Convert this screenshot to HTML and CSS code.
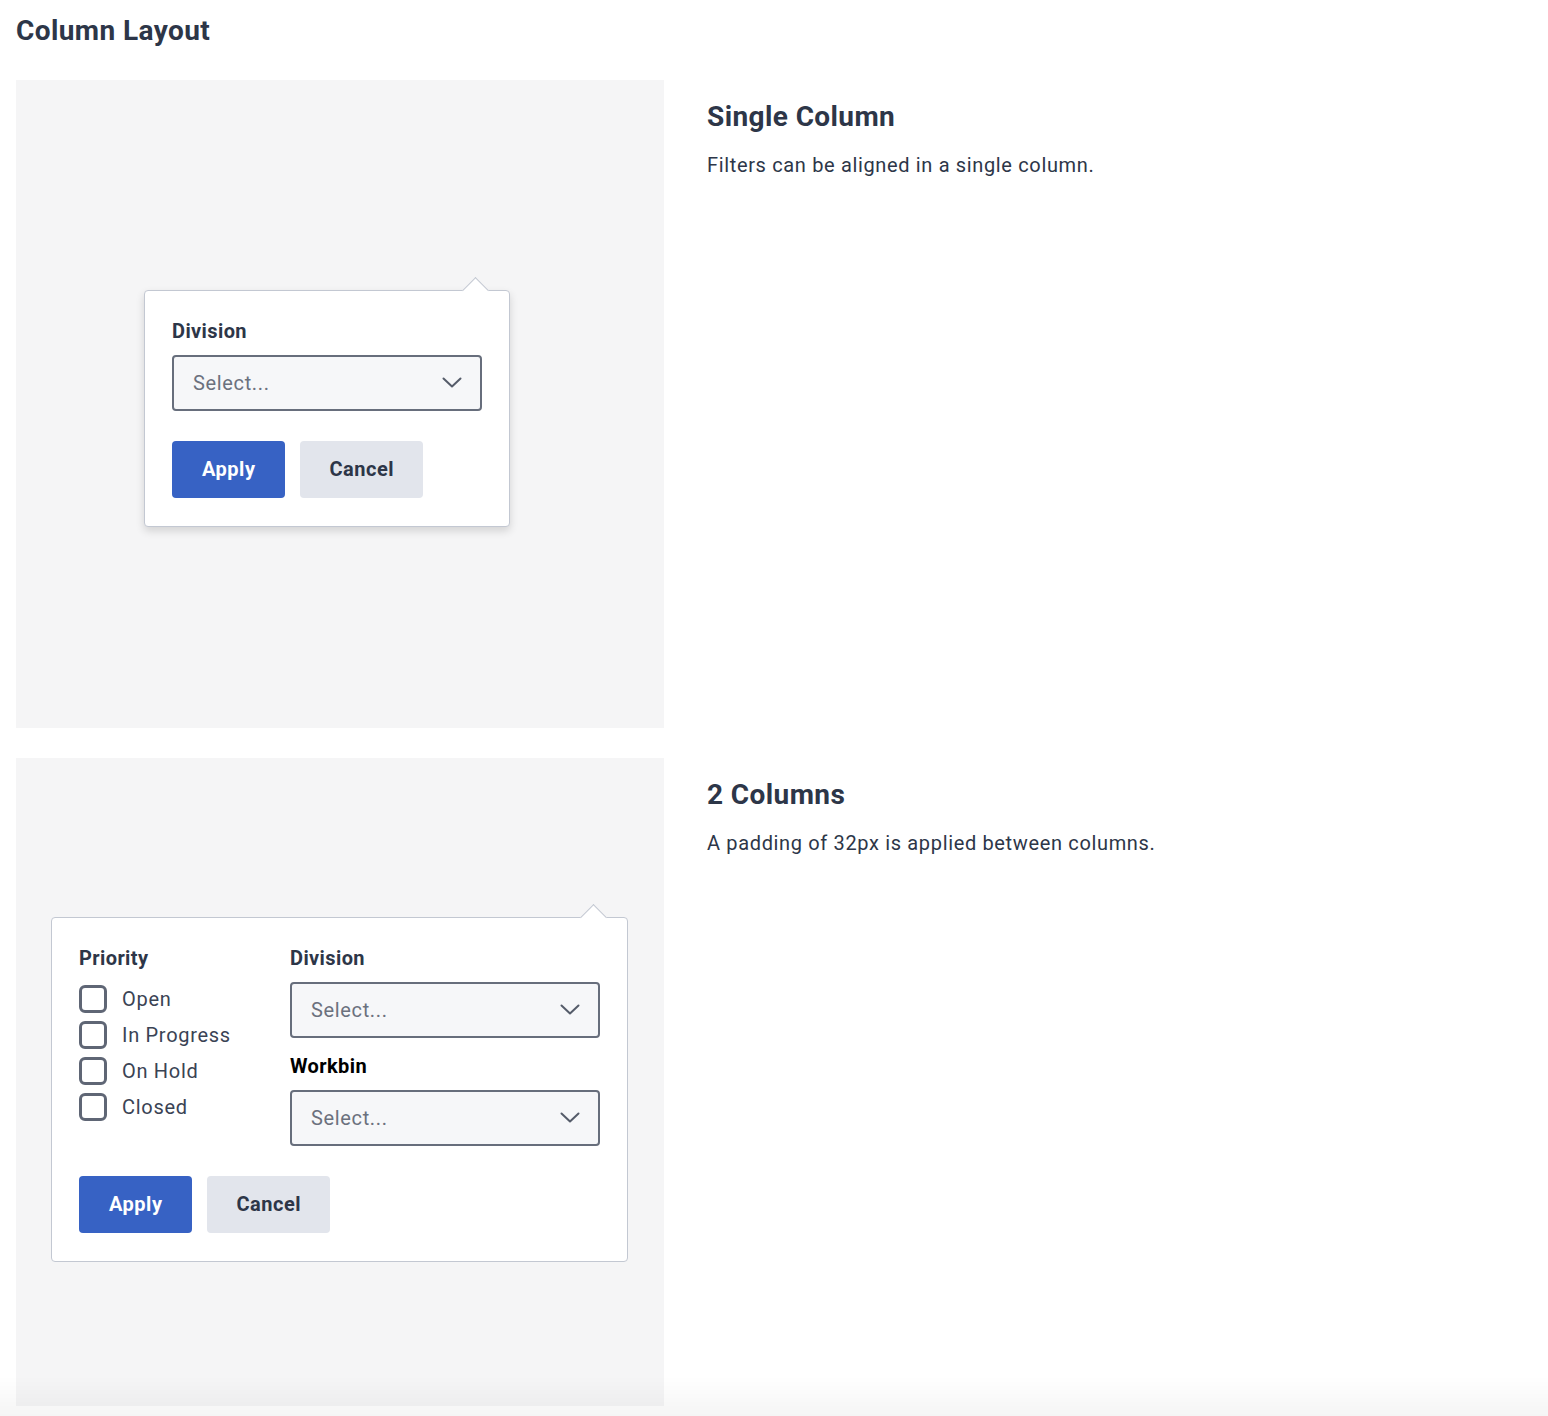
FILE: index.html
```html
<!DOCTYPE html>
<html lang="en">
<head>
    <meta charset="UTF-8">
    <title>Column Layout</title>
    <link rel="stylesheet" href="styles.css">
</head>
<body>
    <div class="page">
        <h1 class="page-title">Column Layout</h1>

        <section class="example">
            <div class="preview">
                <div class="popover popover-single">
                    <div class="popover-box">
                        <div class="field">
                            <label class="field-label">Division</label>
                            <div class="select">
                                <span>Select...</span>
                                <svg class="chevron" width="20" height="11" viewBox="0 0 20 11"><path d="M1.5 1.5l8.5 8 8.5-8" fill="none" stroke="#555c6a" stroke-width="2" stroke-linecap="round" stroke-linejoin="round"/></svg>
                            </div>
                        </div>
                        <div class="actions">
                            <button class="btn btn-primary">Apply</button>
                            <button class="btn btn-secondary">Cancel</button>
                        </div>
                    </div>
                </div>
            </div>
            <div class="description">
                <h2>Single Column</h2>
                <p>Filters can be aligned in a single column.</p>
            </div>
        </section>

        <section class="example">
            <div class="preview">
                <div class="popover popover-double">
                    <div class="popover-box">
                        <div class="columns">
                            <div class="column column-narrow">
                                <div class="field-label">Priority</div>
                                <label class="check"><span class="box"></span>Open</label>
                                <label class="check"><span class="box"></span>In Progress</label>
                                <label class="check"><span class="box"></span>On Hold</label>
                                <label class="check"><span class="box"></span>Closed</label>
                            </div>
                            <div class="column">
                                <div class="field">
                                    <label class="field-label">Division</label>
                                    <div class="select">
                                        <span>Select...</span>
                                        <svg class="chevron" width="20" height="11" viewBox="0 0 20 11"><path d="M1.5 1.5l8.5 8 8.5-8" fill="none" stroke="#555c6a" stroke-width="2" stroke-linecap="round" stroke-linejoin="round"/></svg>
                                    </div>
                                </div>
                                <div class="field field-spaced">
                                    <label class="field-label field-label-black">Workbin</label>
                                    <div class="select">
                                        <span>Select...</span>
                                        <svg class="chevron" width="20" height="11" viewBox="0 0 20 11"><path d="M1.5 1.5l8.5 8 8.5-8" fill="none" stroke="#555c6a" stroke-width="2" stroke-linecap="round" stroke-linejoin="round"/></svg>
                                    </div>
                                </div>
                            </div>
                        </div>
                        <div class="actions">
                            <button class="btn btn-primary">Apply</button>
                            <button class="btn btn-secondary">Cancel</button>
                        </div>
                    </div>
                </div>
            </div>
            <div class="description">
                <h2>2 Columns</h2>
                <p>A padding of 32px is applied between columns.</p>
            </div>
        </section>
    </div>

    <!-- scroll fade at the bottom of the window -->
    <div class="bottom-fade"></div>
</body>
</html>
```

FILE: styles.css
```css
* {
    margin: 0;
    padding: 0;
    box-sizing: border-box;
}

body {
    font-family: Roboto, 'Liberation Sans', sans-serif;
    color: #2d3748;
    background: #fff;
}

.page {
    padding: 13px 16px 10px;
}

.page-title {
    font-size: 28px;
    line-height: 36px;
    font-weight: 700;
    letter-spacing: 0.4px;
    color: #2d3648;
    margin-bottom: 31px;
}

.example {
    display: flex;
    gap: 43px;
    margin-bottom: 30px;
}

.example:last-child {
    margin-bottom: 0;
}

.preview {
    width: 648px;
    height: 648px;
    flex-shrink: 0;
    background: #f5f5f6;
    display: flex;
    align-items: center;
    justify-content: center;
}

.description {
    padding-top: 19px;
}

.description h2 {
    font-size: 28px;
    line-height: 36px;
    font-weight: 700;
    letter-spacing: 0.4px;
    color: #2d3648;
    margin-bottom: 16px;
}

.description p {
    font-size: 20px;
    line-height: 28px;
    letter-spacing: 0.65px;
    color: #2d3648;
}

/* popover */
.popover {
    padding-top: 14px;
}

.popover-single {
    margin-right: 26px;
    margin-bottom: 6px;
}

.popover-double {
    margin-right: 1px;
}

.popover-box {
    position: relative;
    background: #fff;
    border: 1px solid #c3c8d2;
    border-radius: 4px;
    padding: 28px 27px;
}

.popover-single .popover-box {
    width: 366px;
    box-shadow: 0 4px 8px rgba(0, 0, 0, 0.14);
}

.popover-double .popover-box {
    width: 577px;
    padding: 28px 27px;
}

.popover-box::before {
    content: '';
    position: absolute;
    top: -10px;
    right: 24px;
    width: 18px;
    height: 18px;
    background: #fff;
    border-top: 1px solid #c3c8d2;
    border-left: 1px solid #c3c8d2;
    transform: rotate(45deg);
}

.field-label {
    display: block;
    font-size: 20px;
    line-height: 24px;
    font-weight: 700;
    letter-spacing: 0.4px;
    color: #2d3648;
    margin-bottom: 12px;
}

.field-label-black {
    color: #000;
}

.field-spaced {
    margin-top: 16px;
}

.select {
    height: 56px;
    border: 2px solid #676e7c;
    border-radius: 4px;
    background: #f6f7f9;
    display: flex;
    align-items: center;
    justify-content: space-between;
    padding: 0 18px 0 19px;
    font-size: 20px;
    letter-spacing: 0.65px;
    color: #6b717e;
}

.actions {
    display: flex;
    gap: 15px;
    margin-top: 30px;
}

.btn {
    height: 57px;
    border: none;
    border-radius: 4px;
    padding: 0 29px;
    font-family: Roboto, 'Liberation Sans', sans-serif;
    font-size: 20px;
    font-weight: 700;
    letter-spacing: 0.5px;
}

.btn-primary {
    background: #3762c4;
    color: #fff;
    padding: 0 30px;
}

.btn-secondary {
    background: #e2e5ec;
    color: #2d3648;
}

/* two column layout */
.columns {
    display: flex;
    gap: 32px;
}

.column {
    flex: 1;
}

.column-narrow {
    flex: 0 0 179px;
}

.column-narrow .field-label {
    margin-bottom: 11px;
}

.check {
    display: flex;
    align-items: center;
    gap: 15px;
    height: 36px;
    font-size: 20px;
    letter-spacing: 0.7px;
    color: #3a4354;
}

.box {
    width: 28px;
    height: 28px;
    border: 3px solid #5f6675;
    border-radius: 6px;
    background: #fff;
}

.bottom-fade {
    position: fixed;
    left: 0;
    right: 0;
    bottom: 0;
    height: 40px;
    background: linear-gradient(to bottom, rgba(0, 0, 0, 0), rgba(0, 0, 0, 0.04));
    pointer-events: none;
}
```
